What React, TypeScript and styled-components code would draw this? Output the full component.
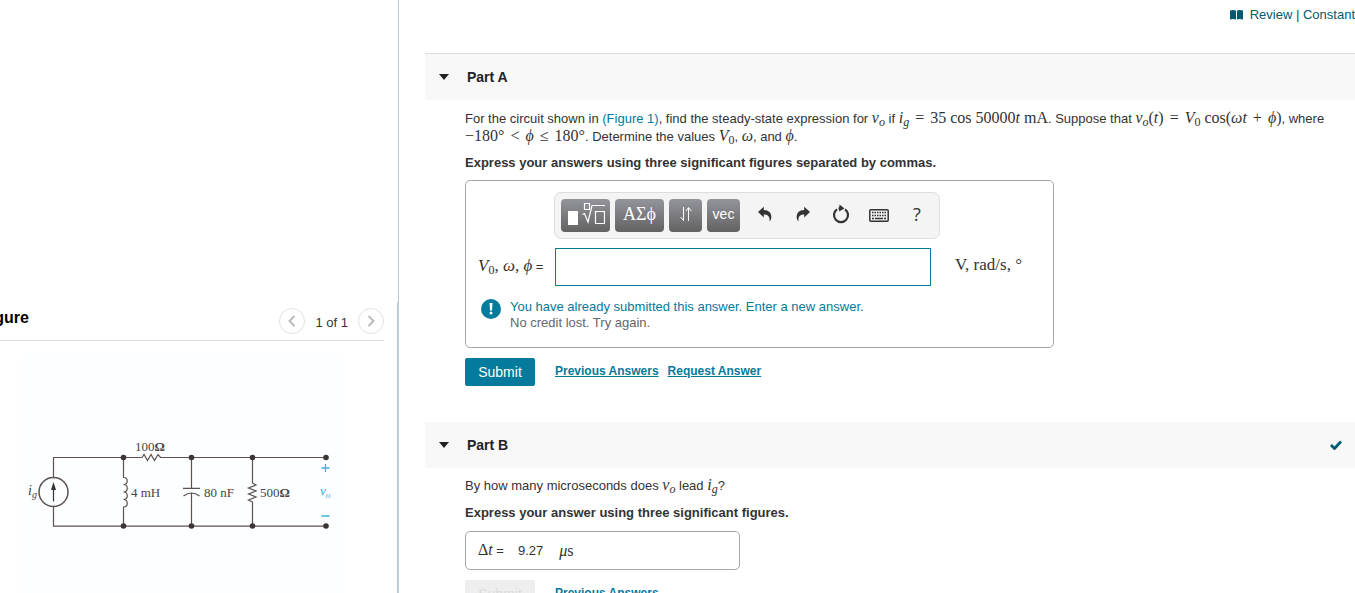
import React from "react";
import styled, { createGlobalStyle } from "styled-components";

const GlobalStyle = createGlobalStyle`
  *, *::before, *::after { box-sizing: border-box; }
  body {
    margin: 0;
    background: #fff;
    color: #333;
    font: 13px/18px "Liberation Sans", Arial, sans-serif;
  }
  p, h2, h3 { margin: 0; }
  button, input { font-family: inherit; }
`;

const serif = `"Liberation Serif", "Times New Roman", serif`;

const Page = styled.div`
  display: grid;
  grid-template-columns: 399px minmax(0, 1fr);
  height: 100vh;
  overflow: hidden;
`;

const Side = styled.aside`
  display: flex;
  flex-direction: column;
  min-height: 0;
`;

const SideBlank = styled.div`
  flex: 0 0 302px;
  border-right: 1px solid #b9cbde;
`;

const FigurePanel = styled.section`
  flex: 1;
  min-height: 0;
  overflow: hidden;
  padding-right: 13px;
  border-right: 2px solid #b9cbde;
`;

const FigureHead = styled.header`
  display: flex;
  align-items: center;
  justify-content: space-between;
  height: 39px;
  border-bottom: 1px solid #ddd;
`;

const FigureTitle = styled.h2`
  margin-left: -20px;
  padding-bottom: 6px;
  color: #000;
  font-size: 16px;
  line-height: 18px;
`;

const Pager = styled.nav`
  display: flex;
  align-items: center;
  gap: 10px;
`;

const PagerText = styled.span`
  padding-top: 4px;
`;

const RoundButton = styled.button`
  display: grid;
  place-items: center;
  width: 26px;
  height: 26px;
  padding: 0;
  border: 1px solid #e2e2e2;
  border-radius: 50%;
  background: #fff;
`;

const Circuit = styled.svg`
  display: block;
  margin: 13px 0 0 22px;
  background: #fdfeff;
  font-family: ${serif};
  font-size: 13px;
`;

const Main = styled.main`
  min-width: 0;
  overflow: hidden;
  padding-left: 26px;
`;

const TopBar = styled.div`
  display: flex;
  justify-content: flex-end;
  height: 53px;
  padding-top: 6px;
`;

const TopLink = styled.a`
  display: flex;
  align-items: center;
  gap: 7px;
  height: 18px;
  color: #005a70;
  text-decoration: none;
  white-space: nowrap;
`;

const PartHead = styled.header<{ $ruled?: boolean }>`
  display: flex;
  align-items: center;
  height: ${(p) => (p.$ruled ? 47 : 46)}px;
  padding: 0 13px 0 14px;
  border-top: ${(p) => (p.$ruled ? "1px solid #ddd" : "0")};
  background: #f8f8f8;
`;

const PartToggle = styled.button`
  display: flex;
  align-items: center;
  gap: 18px;
  flex: 1;
  padding: 0;
  border: 0;
  background: none;
  color: #222;
  font-size: 14px;
  font-weight: bold;
  line-height: 18px;
  text-align: left;
`;

const PartBody = styled.div<{ $loose?: boolean }>`
  display: flex;
  flex-direction: column;
  gap: ${(p) => (p.$loose ? 9 : 8)}px;
  padding: ${(p) => (p.$loose ? 9 : 10)}px 20px 36px 40px;
`;

const Instruction = styled.p`
  font-weight: bold;
`;

const FigureLink = styled.a`
  color: #047a9c;
  text-decoration: none;
`;

const MathText = styled.span<{ $large?: boolean }>`
  font-family: ${serif};
  font-size: ${(p) => (p.$large ? 17 : 16)}px;
  line-height: 16px;
  white-space: nowrap;

  sub { font-size: 12px; line-height: 0; vertical-align: -3px; }
`;

const Rel = styled.span`
  padding: 0 6px;
`;

const AnswerBox = styled.div`
  max-width: 589px;
  height: 168px;
  padding: 11px 12px 0;
  border: 1px solid #a6a6a6;
  border-radius: 5px;
`;

const Toolbar = styled.div`
  display: flex;
  align-items: center;
  gap: 5px;
  width: 386px;
  height: 47px;
  margin-left: 76px;
  padding: 0 6px;
  border: 1px solid #ddd;
  border-radius: 7px;
  background: #f4f4f4;
`;

const PaletteButton = styled.button<{ $wide?: boolean; $serif?: boolean }>`
  display: grid;
  place-items: center;
  width: ${(p) => (p.$wide ? 49 : 33)}px;
  height: 33px;
  padding: 0 0 3px;
  border: 0;
  border-radius: 4px;
  background: linear-gradient(#94949c, #626262);
  color: #fff;
  font-family: ${(p) => (p.$serif ? serif : "inherit")};
  font-size: ${(p) => (p.$serif ? 18 : 14)}px;
  line-height: 18px;
`;

const ToolGroup = styled.div`
  display: flex;
  gap: 8px;
  margin-left: 5px;
  padding-bottom: 3px;
`;

const ToolButton = styled.button`
  display: grid;
  place-items: center;
  width: 30px;
  height: 30px;
  padding: 0;
  border: 0;
  background: none;
  color: #333;
  font-family: "Open Sans", sans-serif;
  font-size: 18px;
  line-height: 20px;
`;

const EntryRow = styled.div`
  display: flex;
  align-items: center;
  margin-top: 9px;
`;

const EntryLabel = styled.label`
  width: 77px;
  white-space: nowrap;
`;

const Entry = styled.input`
  width: 376px;
  height: 38px;
  padding: 0 8px;
  border: 1px solid #047a9c;
  background: #fff;
  font-size: 14px;
  outline: none;
`;

const Units = styled.span`
  padding: 0 0 2px 24px;
`;

const Feedback = styled.div`
  display: flex;
  gap: 9px;
  margin: 12px 0 0 3px;
  line-height: 16px;
`;

const FeedbackText = styled.div`
  padding-top: 1px;
`;

const FeedbackLead = styled.p`
  color: #047a9c;
`;

const FeedbackNote = styled.p`
  color: #666;
`;

const Actions = styled.div<{ $tight?: boolean }>`
  display: flex;
  align-items: center;
  gap: 9px;
  margin-top: ${(p) => (p.$tight ? 1 : 2)}px;
`;

const Submit = styled.button`
  width: 70px;
  height: 28px;
  margin-right: 11px;
  padding: 0;
  border: 0;
  border-radius: 2px;
  background: #047a9c;
  color: #fff;
  font-size: 14px;

  &:disabled { background: #eee; color: #dcdcdc; }
`;

const ActionLink = styled.a`
  padding-bottom: 2px;
  color: #047a9c;
  font-size: 12px;
  font-weight: bold;
`;

const ResultBox = styled.div`
  display: flex;
  align-items: center;
  width: 275px;
  height: 39px;
  padding: 0 12px;
  border: 1px solid #a6a6a6;
  border-radius: 5px;
`;

const ResultValue = styled.span`
  padding: 0 16px 0 14px;
`;

const Vo = () => <><i>v</i><sub><i>o</i></sub></>;
const Ig = () => <><i>i</i><sub><i>g</i></sub></>;
const V0 = () => <><i>V</i><sub>0</sub></>;

const Caret = () => (
  <svg width="10" height="6" viewBox="0 0 10 6" aria-hidden="true">
    <path d="M0 0h10L5 6z" fill="#222" />
  </svg>
);

const Chevron = ({ right }: { right?: boolean }) => (
  <svg width="10" height="12" viewBox="0 0 10 12" aria-hidden="true">
    <path d={right ? "M2.500 1l5 5-5 5" : "M7.500 1l-5 5 5 5"} fill="none" stroke="#bbb" strokeWidth="2" />
  </svg>
);

const ArrowIcon = ({ flip }: { flip?: boolean }) => (
  <svg width="14" height="16" viewBox="0 0 14 16" aria-hidden="true">
    <path
      d="M0 6L5.800 .8v3.200C11 4 13.600 7.500 13.300 11.500c-.1 1.700-.8 3-1.800 4C12 11 10.500 8.500 5.800 8.500v3z"
      fill="#333"
      transform={flip ? "matrix(-1 0 0 1 14 0)" : undefined}
    />
  </svg>
);

const CircuitDiagram = () => (
  <Circuit width="320" height="240" viewBox="0 0 320 240" role="img" aria-label="Circuit diagram">
    <g fill="none" stroke="#5c5250" strokeWidth="1.2">
      <path d="M31.500 123.500V103.500H120l2-3 3.500 6 3.500-6 3.500 6 3.500-6 2.500 3H304" />
      <path d="M31.500 152.500v19.700H304" />
      <circle cx="31.500" cy="138" r="14.500" strokeWidth="1.500" />
      <path d="M31.500 147.500V134" stroke="#333" />
      <path d="M101.500 103.500v20c5 0 5 7 0 7 5 0 5 7.500 0 7.500 5 0 5 7.500 0 7.500 5 0 5 7.500 0 7.500v19.500" />
      <path d="M169.500 103.500V134M161 134.300h17M161.500 142q8-6 16 0M169.500 139v33" />
      <path d="M230.500 103.500v25.500l3.500 2-7.500 3 7.500 3-7.500 3 7.500 3-7.500 3 4 2v25" />
    </g>
    <path d="M31.500 128l-2.500 8h5z" fill="#333" />
    <g fill="#3b3635">
      <circle cx="101.500" cy="103.500" r="2.800" />
      <circle cx="169.500" cy="103.500" r="2.800" />
      <circle cx="230.500" cy="103.500" r="2.800" />
      <circle cx="304" cy="103.500" r="2.800" />
      <circle cx="101.500" cy="172" r="2.800" />
      <circle cx="169.500" cy="172" r="2.800" />
      <circle cx="230.500" cy="172" r="2.800" />
      <circle cx="304" cy="172" r="2.800" />
    </g>
    <g fill="#4a4444">
      <text x="113" y="97">100<tspan fontWeight="bold">Ω</tspan></text>
      <text x="109" y="143">4 mH</text>
      <text x="182" y="143">80 nF</text>
      <text x="238" y="143">500<tspan fontWeight="bold">Ω</tspan></text>
      <text x="6" y="141" fontSize="14" fontStyle="italic">i<tspan dy="3" fontSize="10">g</tspan></text>
    </g>
    <path d="M299.500 114h8M303.500 110v8M299.500 162h8" stroke="#35b5e0" strokeWidth="1.300" />
    <text x="298" y="141" fill="#1fabdc" fontStyle="italic">v<tspan dy="3" fontSize="9">o</tspan></text>
  </Circuit>
);

export default function App() {
  return (
    <>
      <GlobalStyle />
      <Page>
        <Side>
          <SideBlank />
          <FigurePanel>
            <FigureHead>
              <FigureTitle>Figure</FigureTitle>
              <Pager aria-label="Figures">
                <RoundButton type="button" aria-label="Previous figure"><Chevron /></RoundButton>
                <PagerText>1 of 1</PagerText>
                <RoundButton type="button" aria-label="Next figure"><Chevron right /></RoundButton>
              </Pager>
            </FigureHead>
            <CircuitDiagram />
          </FigurePanel>
        </Side>
        <Main>
          <TopBar>
            <TopLink href="#review">
              <svg width="13" height="10" viewBox="0 0 13 10" aria-hidden="true">
                <path d="M0 .5Q3 -.5 6 .5V9.500Q3 8.500 0 9.500zM7 .5Q10 -.5 13 .5V9.500Q10 8.500 7 9.500z" fill="#005a70" />
              </svg>
              Review | Constant
            </TopLink>
          </TopBar>

          <section>
            <PartHead $ruled>
              <PartToggle type="button" aria-expanded="true"><Caret />Part A</PartToggle>
            </PartHead>
            <PartBody>
              <p>
                For the circuit shown in <FigureLink href="#figure">(Figure 1)</FigureLink>, find the steady-state expression for{" "}
                <MathText><Vo /></MathText> if{" "}
                <MathText><Ig /><Rel>=</Rel>35 cos 50000<i>t</i> mA</MathText>. Suppose that{" "}
                <MathText><Vo />(<i>t</i>)<Rel>=</Rel><V0 /> cos(<i>ωt</i><Rel>+</Rel><i>ϕ</i>)</MathText>, where{" "}
                <MathText>−180°<Rel>&lt;</Rel><i>ϕ</i><Rel>≤</Rel>180°</MathText>. Determine the values{" "}
                <MathText><V0 /></MathText>, <MathText><i>ω</i></MathText>, and <MathText><i>ϕ</i></MathText>.
              </p>
              <Instruction>Express your answers using three significant figures separated by commas.</Instruction>
              <AnswerBox>
                <Toolbar role="toolbar" aria-label="Equation editor">
                  <PaletteButton type="button" $wide aria-label="Templates">
                    <svg width="38" height="24" viewBox="0 0 38 24" aria-hidden="true">
                      <path d="M1 9h10v14H1z" fill="#fff" />
                      <path d="M15.500 12.500l2-1 3.500 8.500L25 3.500h13M28.500 9.500h9v12h-9zM17.500 1.500h5v6h-5z" fill="none" stroke="#fff" strokeWidth="1.200" />
                    </svg>
                  </PaletteButton>
                  <PaletteButton type="button" $wide $serif>ΑΣϕ</PaletteButton>
                  <PaletteButton type="button" aria-label="Arrows">
                    <svg width="12" height="16" viewBox="0 0 12 16" aria-hidden="true">
                      <path d="M3.500 1v13M.5 11l3 3.500V11M8.500 15V2M11.500 5l-3-3.500L6 5" fill="none" stroke="#fff" strokeWidth="1" />
                    </svg>
                  </PaletteButton>
                  <PaletteButton type="button">vec</PaletteButton>
                  <ToolGroup>
                    <ToolButton type="button" aria-label="Undo"><ArrowIcon /></ToolButton>
                    <ToolButton type="button" aria-label="Redo"><ArrowIcon flip /></ToolButton>
                    <ToolButton type="button" aria-label="Reset">
                      <svg width="18" height="20" viewBox="0 0 18 20" aria-hidden="true">
                        <path d="M5 5.300A7 7 0 1 0 13 5.300M9 4.300L6.500 4.700" fill="none" stroke="#333" strokeWidth="2.200" />
                        <path d="M7.500 .5l5 4-5.500 3z" fill="#333" />
                      </svg>
                    </ToolButton>
                    <ToolButton type="button" aria-label="Keyboard">
                      <svg width="20" height="18" viewBox="0 0 20 18" aria-hidden="true">
                        <rect x=".8" y="4.800" width="18.400" height="11.400" rx="1" fill="none" stroke="#333" strokeWidth="1.500" />
                        <path d="M3 7.500h14M3 10.500h14" stroke="#333" strokeWidth="1.500" strokeDasharray="1.500 1" />
                        <path d="M3 13.500h2M6 13.500h8M15 13.500h2" stroke="#333" strokeWidth="1.500" />
                      </svg>
                    </ToolButton>
                    <ToolButton type="button" aria-label="Help">?</ToolButton>
                  </ToolGroup>
                </Toolbar>
                <EntryRow>
                  <EntryLabel htmlFor="answer-a">
                    <MathText $large><V0 />, <i>ω</i>, <i>ϕ</i></MathText> =
                  </EntryLabel>
                  <Entry id="answer-a" type="text" />
                  <Units><MathText $large>V, rad/s, °</MathText></Units>
                </EntryRow>
                <Feedback>
                  <svg width="20" height="21" viewBox="0 0 20 21" aria-hidden="true">
                    <circle cx="10" cy="11" r="10" fill="#047a9c" />
                    <path d="M8.500 5h3l-.5 7.500H9z" fill="#fff" />
                    <circle cx="10" cy="15" r="1.500" fill="#fff" />
                  </svg>
                  <FeedbackText>
                    <FeedbackLead>You have already submitted this answer. Enter a new answer.</FeedbackLead>
                    <FeedbackNote>No credit lost. Try again.</FeedbackNote>
                  </FeedbackText>
                </Feedback>
              </AnswerBox>
              <Actions>
                <Submit type="button">Submit</Submit>
                <ActionLink href="#previous-a">Previous Answers</ActionLink>
                <ActionLink href="#request-a">Request Answer</ActionLink>
              </Actions>
            </PartBody>
          </section>

          <section>
            <PartHead>
              <PartToggle type="button" aria-expanded="true"><Caret />Part B</PartToggle>
              <svg width="12" height="10" viewBox="0 0 12 10" role="img" aria-label="Correct">
                <path d="M1 5l3.500 3.500L11 1.500" fill="none" stroke="#005a70" strokeWidth="2.800" />
              </svg>
            </PartHead>
            <PartBody $loose>
              <p>
                By how many microseconds does <MathText><Vo /></MathText> lead <MathText><Ig /></MathText>?
              </p>
              <Instruction>Express your answer using three significant figures.</Instruction>
              <ResultBox>
                <span><MathText>Δ<i>t</i></MathText> =</span>
                <ResultValue>9.27</ResultValue>
                <MathText><i>μ</i>s</MathText>
              </ResultBox>
              <Actions $tight>
                <Submit type="button" disabled>Submit</Submit>
                <ActionLink href="#previous-b">Previous Answers</ActionLink>
              </Actions>
            </PartBody>
          </section>
        </Main>
      </Page>
    </>
  );
}
